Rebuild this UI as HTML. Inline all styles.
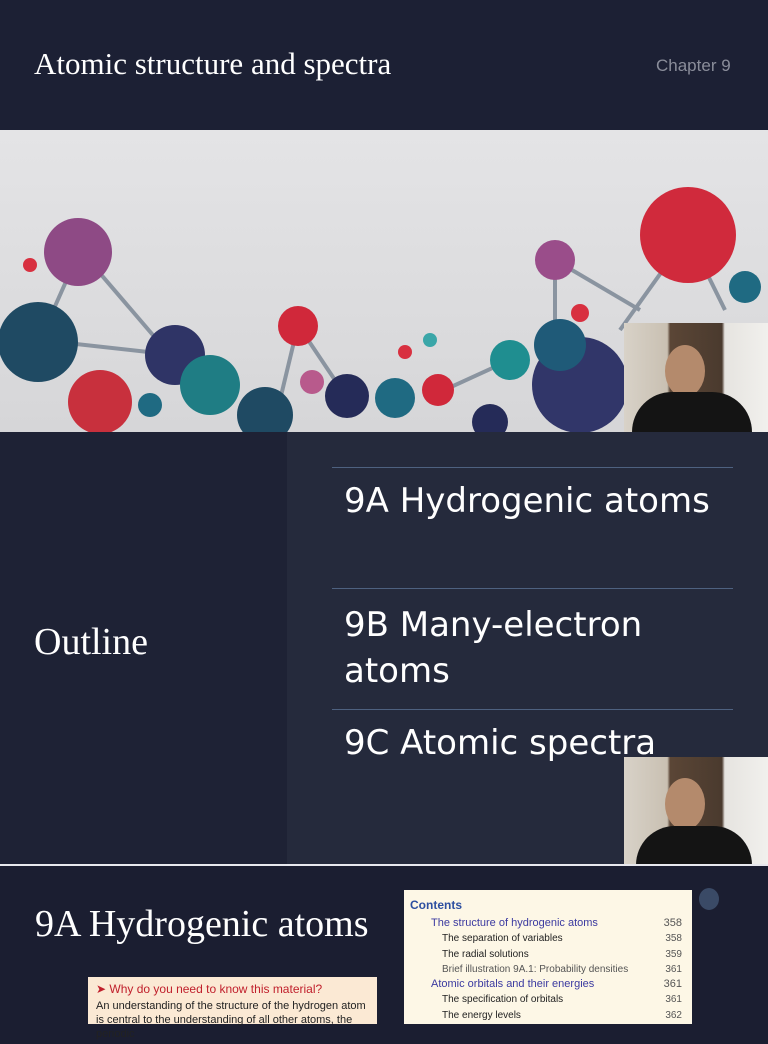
<!DOCTYPE html><html><head><style>
body{margin:0;width:768px;height:1024px;overflow:hidden;background:#1b1e31;position:relative;font-family:"Liberation Sans",sans-serif}
.a{position:absolute}
.serif{font-family:"Liberation Serif",serif;color:#fff}
.sans{font-family:"DejaVu Sans","Liberation Sans",sans-serif;color:#fff}
.cam{background:linear-gradient(90deg,#d8d2c8 0,#c9c0b2 30%,#5b4636 32%,#4a3a2e 68%,#e6e4e0 70%,#f1f0ed 100%)}
</style></head><body>
<div class="a" style="left:0;top:0;width:768px;height:130px;background:#1c2034"></div>
<div class="a serif" style="left:34px;top:46px;font-size:31px">Atomic structure and spectra</div>
<div class="a" style="left:656px;top:56px;font-size:17px;color:#8a8d9a">Chapter 9</div>
<svg class="a" style="left:0;top:130px" width="768" height="302">
<defs><linearGradient id="bg" x1="0" y1="0" x2="0" y2="1"><stop offset="0" stop-color="#e4e4e6"/><stop offset="1" stop-color="#d6d6d8"/></linearGradient></defs>
<rect width="768" height="302" fill="url(#bg)"/>
<g stroke="#8a94a0" stroke-width="4">
<line x1="80" y1="120" x2="40" y2="210"/><line x1="80" y1="120" x2="170" y2="225"/><line x1="40" y1="210" x2="175" y2="225"/>
<line x1="298" y1="195" x2="280" y2="270"/><line x1="298" y1="195" x2="345" y2="265"/><line x1="555" y1="130" x2="555" y2="210"/><line x1="555" y1="130" x2="640" y2="180"/><line x1="688" y1="105" x2="620" y2="200"/><line x1="688" y1="105" x2="725" y2="180"/><line x1="440" y1="262" x2="510" y2="230"/>
</g>
<circle cx="78" cy="122" r="34" fill="#8e4a85"/><circle cx="38" cy="212" r="40" fill="#1f4a63"/><circle cx="100" cy="272" r="32" fill="#c8303d"/><circle cx="175" cy="225" r="30" fill="#2f3466"/><circle cx="210" cy="255" r="30" fill="#1f7d84"/><circle cx="30" cy="135" r="7" fill="#d83040"/>
<circle cx="298" cy="196" r="20" fill="#d0283a"/><circle cx="347" cy="266" r="22" fill="#252b58"/><circle cx="265" cy="285" r="28" fill="#1f4a63"/><circle cx="395" cy="268" r="20" fill="#1f6a82"/><circle cx="312" cy="252" r="12" fill="#b85a8c"/>
<circle cx="438" cy="260" r="16" fill="#d0283a"/><circle cx="510" cy="230" r="20" fill="#1f8e90"/><circle cx="555" cy="130" r="20" fill="#9a4d8a"/><circle cx="580" cy="255" r="48" fill="#313669"/><circle cx="560" cy="215" r="26" fill="#1f5a78"/><circle cx="688" cy="105" r="48" fill="#d02a3c"/><circle cx="745" cy="157" r="16" fill="#1f6a82"/><circle cx="580" cy="183" r="9" fill="#d83040"/><circle cx="405" cy="222" r="7" fill="#d83040"/><circle cx="430" cy="210" r="7" fill="#3aa6a8"/><circle cx="490" cy="292" r="18" fill="#252b58"/><circle cx="150" cy="275" r="12" fill="#1f6a82"/>
</svg>
<div class="a cam" style="left:624px;top:323px;width:144px;height:109px"></div>
<div class="a" style="left:665px;top:345px;width:40px;height:52px;border-radius:50%;background:#b48a6c"></div>
<div class="a" style="left:632px;top:392px;width:120px;height:40px;border-radius:40px 40px 0 0;background:#141414"></div>
<div class="a" style="left:0;top:432px;width:287px;height:433px;background:#1e2235"></div>
<div class="a" style="left:287px;top:432px;width:481px;height:433px;background:#252a3c"></div>
<div class="a serif" style="left:34px;top:620px;font-size:38px">Outline</div>
<div class="a" style="left:332px;top:467px;width:401px;height:1px;background:#4e6180"></div>
<div class="a" style="left:332px;top:588px;width:401px;height:1px;background:#4e6180"></div>
<div class="a" style="left:332px;top:709px;width:401px;height:1px;background:#4e6180"></div>
<div class="a sans" style="left:344px;top:481px;font-size:34px">9A Hydrogenic atoms</div>
<div class="a sans" style="left:344px;top:602px;font-size:34px;line-height:46px">9B Many-electron<br>atoms</div>
<div class="a sans" style="left:344px;top:723px;font-size:34px">9C Atomic spectra</div>
<div class="a cam" style="left:624px;top:757px;width:144px;height:108px"></div>
<div class="a" style="left:665px;top:778px;width:40px;height:52px;border-radius:50%;background:#b48a6c"></div>
<div class="a" style="left:636px;top:826px;width:116px;height:39px;border-radius:40px 40px 0 0;background:#141414"></div>
<div class="a" style="left:0;top:864px;width:768px;height:2px;background:#e8e8ee"></div>
<div class="a serif" style="left:35px;top:902px;font-size:38px">9A Hydrogenic atoms</div>
<div class="a" style="left:699px;top:888px;width:20px;height:22px;border-radius:50%;background:#3a4a66"></div>
<div class="a" style="left:88px;top:977px;width:289px;height:47px;background:#fbe9d4;font-size:12px">
<div style="color:#c0202c;padding:5px 8px 0;font-size:12px">➤ Why do you need to know this material?</div>
<div style="color:#222;padding:3px 8px;font-size:11px;line-height:14px">An understanding of the structure of the hydrogen atom is central to the understanding of all other atoms, the periodic</div></div>
<div class="a" style="left:404px;top:890px;width:288px;height:134px;background:#fdf7e6;font-size:10px;color:#222">
<div style="color:#2d4fa0;font-weight:bold;font-size:12px;padding:8px 6px 4px">Contents</div>
<div style="position:relative;line-height:15.3px;padding-left:27px">
<div style="color:#3b3aa0;font-size:11px">The structure of hydrogenic atoms<span style="float:right;margin-right:10px;color:#555">358</span></div>
<div style="padding-left:11px">The separation of variables<span style="float:right;margin-right:10px;color:#555">358</span></div>
<div style="padding-left:11px">The radial solutions<span style="float:right;margin-right:10px;color:#555">359</span></div>
<div style="padding-left:11px;color:#555">Brief illustration 9A.1: Probability densities<span style="float:right;margin-right:10px">361</span></div>
<div style="color:#3b3aa0;font-size:11px">Atomic orbitals and their energies<span style="float:right;margin-right:10px;color:#555">361</span></div>
<div style="padding-left:11px">The specification of orbitals<span style="float:right;margin-right:10px;color:#555">361</span></div>
<div style="padding-left:11px">The energy levels<span style="float:right;margin-right:10px;color:#555">362</span></div>
</div></div>
</body></html>
